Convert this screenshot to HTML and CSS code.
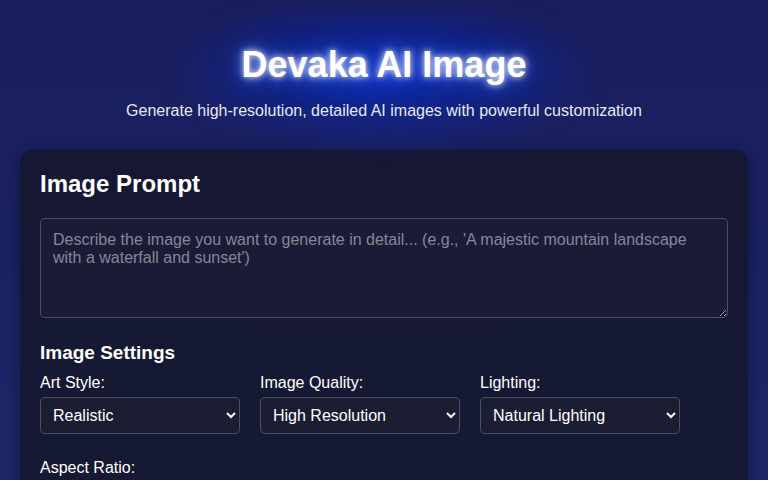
FILE: index.html
```html
<!DOCTYPE html>
<html lang="en">
<head>
<meta charset="utf-8">
<title>Devaka AI Image</title>
<link rel="stylesheet" href="styles.css">
</head>
<body>
<div class="page">
  <header class="hero">
    <h1 class="title">Devaka AI Image</h1>
    <p class="subtitle">Generate high-resolution, detailed AI images with powerful customization</p>
  </header>
  <main class="card">
    <h2 class="card-title">Image Prompt</h2>
    <textarea class="prompt" placeholder="Describe the image you want to generate in detail... (e.g., 'A majestic mountain landscape with a waterfall and sunset')"></textarea>
    <h3 class="section-title">Image Settings</h3>
    <div class="settings">
      <div class="field">
        <label class="label">Art Style:</label>
        <select class="select">
          <option>Realistic</option>
          <option>Anime</option>
        </select>
      </div>
      <div class="field">
        <label class="label">Image Quality:</label>
        <select class="select">
          <option>High Resolution</option>
          <option>Standard</option>
        </select>
      </div>
      <div class="field">
        <label class="label">Lighting:</label>
        <select class="select">
          <option>Natural Lighting</option>
          <option>Studio Lighting</option>
        </select>
      </div>
    </div>
    <div class="field field-wide">
      <label class="label">Aspect Ratio:</label>
      <select class="select">
        <option>1:1 Square</option>
      </select>
    </div>
  </main>
</div>
</body>
</html>
```

FILE: styles.css
```css
html, body {
  margin: 0;
  padding: 0;
}
body {
  font-family: "Liberation Sans", Arial, sans-serif;
  color: #fff;
  background: linear-gradient(180deg, #1a1d5c 0%, #1c2466 50%, #1f2b70 100%);
  min-height: 480px;
  overflow: hidden;
}
.page {
  padding: 20px;
}
.hero {
  text-align: center;
  padding-top: 24px;
  margin-bottom: 30px;
  position: relative;
}
.hero::before {
  content: "";
  position: absolute;
  left: 50%;
  top: -10px;
  width: 420px;
  height: 140px;
  transform: translateX(-50%);
  background: radial-gradient(ellipse at 50% 45%, rgba(10, 50, 210, 0.8) 0%, rgba(10, 40, 170, 0.45) 40%, rgba(20, 30, 110, 0) 75%);
  filter: blur(8px);
  z-index: 0;
}
.title {
  position: relative;
  z-index: 1;
  margin: 0;
  font-size: 36px;
  font-weight: 700;
  line-height: 42px;
  text-shadow: 0 0 6px rgba(255, 255, 255, 0.9), 0 0 14px rgba(120, 160, 255, 0.9), 0 0 30px rgba(40, 90, 255, 0.8);
}
.subtitle {
  position: relative;
  z-index: 1;
  margin: 16px 0 0;
  font-size: 16px;
  line-height: 18px;
  color: #e6e8f5;
}
.card {
  background: rgba(22, 24, 48, 0.95);
  border-radius: 12px;
  padding: 20px;
  box-shadow: 0 4px 20px rgba(0, 0, 0, 0.35);
  min-height: 400px;
}
.card-title {
  margin: 0;
  font-size: 24px;
  line-height: 28px;
  font-weight: 700;
}
.prompt {
  display: block;
  box-sizing: border-box;
  width: 100%;
  height: 100px;
  margin-top: 20px;
  padding: 12px;
  background: rgba(30, 32, 58, 0.6);
  border: 1px solid rgba(255, 255, 255, 0.22);
  border-radius: 5px;
  color: #fff;
  font-family: "Liberation Sans", Arial, sans-serif;
  font-size: 16px;
  line-height: 18px;
  resize: vertical;
}
.prompt::placeholder {
  color: #858797;
}
.section-title {
  margin: 24px 0 0;
  font-size: 19px;
  line-height: 22px;
  font-weight: 700;
}
.settings {
  display: flex;
  gap: 20px;
  margin-top: 10px;
}
.field {
  display: flex;
  flex-direction: column;
}
.field-wide {
  margin-top: 25px;
}
.label {
  font-size: 16px;
  line-height: 18px;
  margin-bottom: 5px;
}
.select {
  width: 200px;
  height: 37px;
  box-sizing: border-box;
  padding: 0 8px;
  background: #1b1d33;
  border: 1px solid rgba(255, 255, 255, 0.22);
  border-radius: 5px;
  color: #fff;
  font-family: "Liberation Sans", Arial, sans-serif;
  font-size: 16px;
  color-scheme: dark;
}
```
